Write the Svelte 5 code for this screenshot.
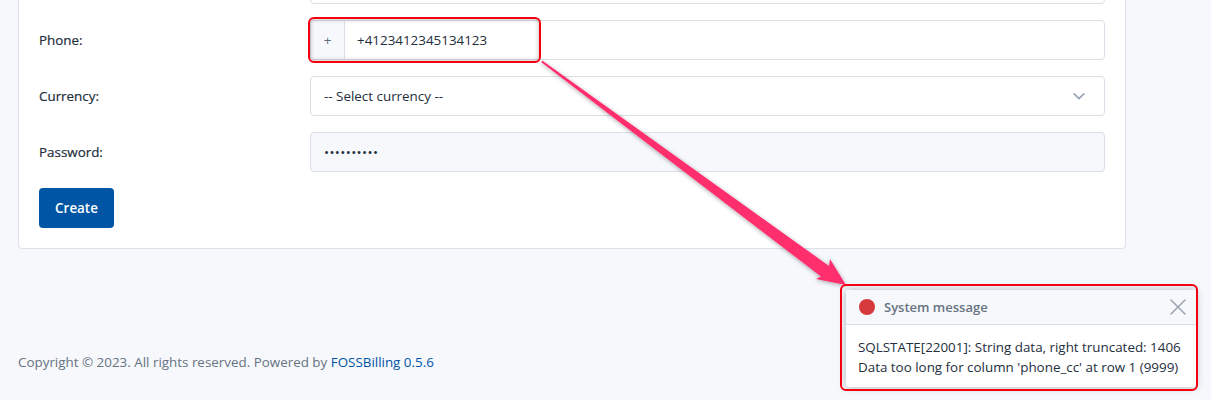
<script>
	let phone = '+4123412345134123';
	const fields = ['Phone:', 'Currency:', 'Password:'];
</script>

<div class="page">
	<form class="card">
		<div class="row">
			<span class="label"></span>
			<div class="control"></div>
		</div>
		<div class="row">
			<span class="label">{fields[0]}</span>
			<div class="control group">
				<span class="prefix">+</span>
				<span class="value">{phone}</span>
			</div>
		</div>
		<div class="row">
			<span class="label">{fields[1]}</span>
			<div class="control select">
				<span>-- Select currency --</span>
				<svg width="14" height="14" viewBox="0 0 16 16" fill="none" stroke="#9aa5b6" stroke-width="2" stroke-linecap="round" stroke-linejoin="round">
					<path d="M2.5 5.5 8 11l5.500-5.500" />
				</svg>
			</div>
		</div>
		<div class="row">
			<span class="label">{fields[2]}</span>
			<div class="control filled"><span class="dots">••••••••••</span></div>
		</div>
		<button type="button" class="btn">Create</button>
	</form>

	<footer class="footer">
		Copyright © 2023. All rights reserved. Powered by <a href="#top">FOSSBilling 0.5.6</a>
	</footer>
</div>

<div class="toast">
	<div class="toast-head">
		<span class="dot"></span>
		<strong>System message</strong>
		<svg class="close" width="16" height="16" viewBox="0 0 16 16" fill="none" stroke="#9aa3af" stroke-width="1.500" stroke-linecap="round">
			<path d="M1 1l14 14M15 1 1 15" />
		</svg>
	</div>
	<div class="toast-body">
		SQLSTATE[22001]: String data, right truncated: 1406<br />
		Data too long for column 'phone_cc' at row 1 (9999)
	</div>
</div>

<svg class="arrow" width="1211" height="400" viewBox="0 0 1211 400">
	<defs>
		<filter id="shade" x="-10%" y="-10%" width="120%" height="120%">
			<feDropShadow dx="0" dy="1" stdDeviation="2" flood-color="#000" flood-opacity="0.35" />
		</filter>
	</defs>
	<path
		d="M541 62 L542.500 60.800 L829 266 L830 259 L846 285 L816 279 L821 276.500 Z"
		fill="#ff2d6d"
		filter="url(#shade)"
	/>
</svg>

<div class="mark mark-phone"></div>
<div class="mark mark-toast"></div>

<style>
	:global(body) {
		background: #f6f8fc;
		font-family: 'Open Sans', 'Noto Sans', sans-serif;
		font-size: 13.4px;
		color: #232e3c;
		overflow: hidden;
	}

	.page {
		height: 400px;
		overflow: hidden;
		padding: 0 85px 0 18px;
		position: relative;
	}

	.card {
		margin-top: -57px;
		padding: 20px;
		background: #fff;
		border: 1px solid #dde2ea;
		border-radius: 4px;
		display: flex;
		flex-direction: column;
		gap: 16px;
		align-items: flex-start;
	}

	.row {
		display: flex;
		align-items: center;
		width: 100%;
	}

	.label {
		width: 271px;
		flex: none;
		font-weight: 500;
		-webkit-text-stroke: 0.2px #232e3c;
	}

	.control {
		flex: 1;
		height: 40px;
		box-sizing: border-box;
		border: 1px solid #dadfe8;
		border-radius: 4px;
		background: #fff;
		display: flex;
		align-items: center;
	}

	.group {
		padding: 0;
	}

	.prefix {
		width: 33px;
		height: 100%;
		flex: none;
		display: flex;
		align-items: center;
		justify-content: center;
		background: #f6f8fc;
		border-right: 1px solid #dadfe8;
		border-radius: 3px 0 0 3px;
		color: #626976;
	}

	.value {
		padding-left: 12px;
	}

	.select {
		justify-content: space-between;
		padding: 0 18px 0 13px;
	}

	.filled {
		background: #f6f8fc;
		padding: 0 13px;
	}

	.dots {
		font-size: 13.4px;
		letter-spacing: 0.4px;
	}

	.btn {
		width: 75px;
		height: 40px;
		border: none;
		border-radius: 4px;
		background: #0055a5;
		color: #fff;
		font: 600 13.4px 'Open Sans', 'Noto Sans', sans-serif;
		padding: 0;
	}

	.footer {
		margin-top: 104px;
		line-height: 18px;
		color: #667382;
	}

	.footer a {
		color: #0054a6;
		text-decoration: none;
	}

	.toast {
		position: absolute;
		left: 846px;
		top: 290px;
		width: 350px;
		height: 97px;
		box-sizing: border-box;
		background: #fff;
		box-shadow: 0 0 8px rgba(35, 46, 60, 0.35);
		border-radius: 3px;
	}

	.toast-head {
		height: 35px;
		box-sizing: border-box;
		display: flex;
		align-items: center;
		gap: 9px;
		padding: 0 10px 0 13px;
		background: #f7f8fb;
		border-bottom: 1px solid #d9dde5;
		color: #667382;
	}

	.toast-head strong {
		font-size: 13px;
		font-weight: 600;
		flex: 1;
	}

	.dot {
		width: 16px;
		height: 16px;
		border-radius: 50%;
		background: #d63939;
	}

	.toast-body {
		padding: 12px;
		line-height: 20px;
	}

	.arrow {
		position: absolute;
		left: 0;
		top: 0;
		pointer-events: none;
	}

	.mark {
		position: absolute;
		box-sizing: border-box;
		border: 2px solid #f5000f;
		border-radius: 6px;
		pointer-events: none;
	}

	.mark-phone {
		left: 308px;
		top: 17px;
		width: 233px;
		height: 46px;
		box-shadow: inset 0 0 5px rgba(0, 0, 0, 0.3);
	}

	.mark-toast {
		left: 840px;
		top: 284px;
		width: 358px;
		height: 107px;
	}
</style>
